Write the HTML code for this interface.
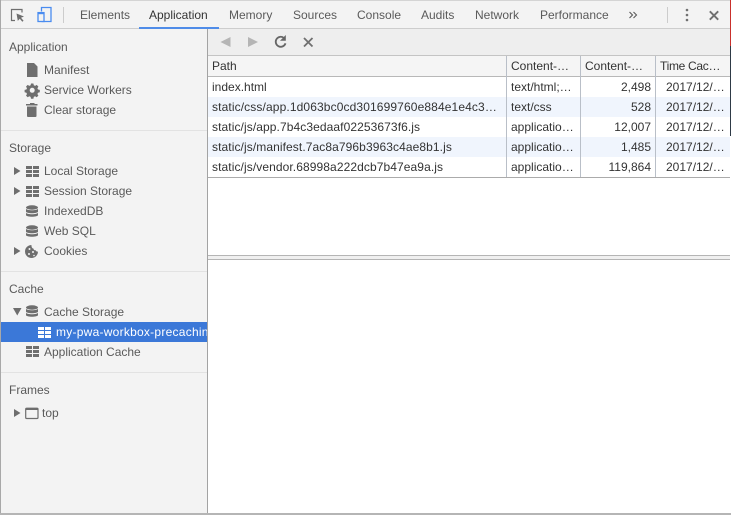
<!DOCTYPE html>
<html><head><meta charset="utf-8"><style>
html,body{margin:0;padding:0;width:731px;height:515px;overflow:hidden;background:#fff}
body{font-family:"Liberation Sans",sans-serif;font-size:12px;color:#303030;position:relative}
.a{position:absolute}
.t{position:absolute;white-space:nowrap;line-height:14px}
.g{color:#5a5a5a}
svg{position:absolute;overflow:visible}
.tab{position:absolute;top:8px;line-height:14px;color:#5a5a5a;white-space:nowrap}
.sec{color:#5a5a5a}
.c{position:absolute;white-space:nowrap;line-height:14px;color:#333}
.p{letter-spacing:.09px}
.r{text-align:right}
</style></head><body>
<!-- toolbar -->
<div class="a" style="left:0;top:0;width:730px;height:28px;background:#f3f3f3"></div>
<div class="a" style="left:0;top:0;width:730px;height:1px;background:#d4d4d4"></div>
<div class="a" style="left:0;top:28px;width:730px;height:1px;background:#cdcdcd"></div>
<svg style="left:0;top:0" width="60" height="28">
<path d="M15 20.500h-3.500v-11h10.500v3" fill="none" stroke="#6e6e6e" stroke-width="1.200"/>
<path d="M16.500 13.500l7.500 3-3 1.200 2.600 3-1.300 1-2.500-3-2 2.200z" fill="#6e6e6e"/>
<path d="M41.500 11.500v-4h9.500v14h-9.500" fill="none" stroke="#4a8cf0" stroke-width="1.300"/>
<rect x="38" y="12.600" width="6" height="8.900" fill="#f3f3f3" stroke="#4a8cf0" stroke-width="1.300"/>
<rect x="38" y="12" width="6" height="2.200" fill="#4a8cf0"/>
</svg>
<div class="a" style="left:63px;top:7px;width:1px;height:16px;background:#ccc"></div>
<div class="tab" style="left:80px">Elements</div>
<div class="tab" style="left:149px;color:#333">Application</div>
<div class="a" style="left:139px;top:27px;width:80px;height:2px;background:#4f8ce8"></div>
<div class="tab" style="left:229px">Memory</div>
<div class="tab" style="left:293px">Sources</div>
<div class="tab" style="left:357px">Console</div>
<div class="tab" style="left:421px">Audits</div>
<div class="tab" style="left:475px">Network</div>
<div class="tab" style="left:540px">Performance</div>
<svg style="left:628px;top:10px" width="12" height="10"><path d="M1.500 2l3 3-3 3M5.500 2l3 3-3 3" fill="none" stroke="#5a5a5a" stroke-width="1.100"/></svg>
<div class="a" style="left:667px;top:7px;width:1px;height:16px;background:#ccc"></div>
<svg style="left:680px;top:8px" width="14" height="16"><circle cx="7" cy="2" r="1.300" fill="#707070"/><circle cx="7" cy="7" r="1.300" fill="#707070"/><circle cx="7" cy="12" r="1.300" fill="#707070"/></svg>
<svg style="left:708px;top:9px" width="13" height="13"><path d="M1.800 2.300l8.400 8.400M10.200 2.300l-8.400 8.400" stroke="#707070" stroke-width="1.900"/></svg>
<!-- right-edge -->
<div class="a" style="left:730px;top:0;width:1px;height:46px;background:#c9302c"></div>
<div class="a" style="left:730px;top:46px;width:1px;height:90px;background:#2e3a46"></div>
<!-- sidebar -->
<div class="a" style="left:0;top:29px;width:207px;height:484px;background:#f3f3f3"></div>
<div class="a" style="left:0;top:0;width:1px;height:515px;background:#a8a8a8"></div>
<div class="a" style="left:207px;top:29px;width:1px;height:485px;background:#a3a3a3"></div>
<div class="a" style="left:0;top:513px;width:731px;height:2px;background:#b5b5b5"></div>
<div class="a" style="left:1px;top:130px;width:206px;height:1px;background:#e2e2e2"></div>
<div class="a" style="left:1px;top:271px;width:206px;height:1px;background:#e2e2e2"></div>
<div class="a" style="left:1px;top:372px;width:206px;height:1px;background:#e2e2e2"></div>

<div class="t sec" style="left:9px;top:40px">Application</div>
<div class="t g" style="left:44px;top:63px">Manifest</div>
<div class="t g" style="left:44px;top:83px">Service Workers</div>
<div class="t g" style="left:44px;top:103px">Clear storage</div>
<svg style="left:0;top:60px" width="44" height="62">
<path d="M27 3h7l3.500 3.500V17H27z" fill="#6e6e6e"/>
<g transform="translate(-1 0)"><path d="M32 23.500h2.400l.4 1.800 1.300.6 1.600-1 1.700 1.700-1 1.600.6 1.300 1.800.4v2.400l-1.800.4-.6 1.300 1 1.600-1.700 1.700-1.600-1-1.300.6-.4 1.800H32l-.4-1.800-1.300-.6-1.600 1-1.700-1.700 1-1.600-.6-1.300-1.800-.4v-2.400l1.800-.4.6-1.300-1-1.600 1.700-1.700 1.600 1 1.300-.6zM33.200 27.800a2.500 2.500 0 1 0 0 5 2.500 2.500 0 0 0 0-5z" fill="#6e6e6e" fill-rule="evenodd"/></g>
<path d="M30 43h4.500v1h3v1.500H26V44h4zM27 46.500h9.500V56a1 1 0 0 1-1 1H28a1 1 0 0 1-1-1z" fill="#6e6e6e"/>
</svg>

<div class="t sec" style="left:9px;top:141px">Storage</div>
<div class="t g" style="left:44px;top:164px">Local Storage</div>
<div class="t g" style="left:44px;top:184px">Session Storage</div>
<div class="t g" style="left:44px;top:204px">IndexedDB</div>
<div class="t g" style="left:44px;top:224px">Web SQL</div>
<div class="t g" style="left:44px;top:244px">Cookies</div>
<svg style="left:0;top:160px" width="44" height="100">
<g fill="#6e6e6e">
<path d="M14 7l6.500 4-6.500 4zM14 27l6.500 4-6.500 4zM14 87l6.500 4-6.500 4z"/>
<path d="M26 6h6v3h-6zM33 6h6v3h-6zM26 10h6v3h-6zM33 10h6v3h-6zM26 14h6v3h-6zM33 14h6v3h-6z"/>
<path d="M26 26h6v3h-6zM33 26h6v3h-6zM26 30h6v3h-6zM33 30h6v3h-6zM26 34h6v3h-6zM33 34h6v3h-6z"/>
<ellipse cx="32" cy="47.500" rx="6" ry="2.200"/><path d="M26 48.800c1 2 11 2 12 0v2.900c-1 2-11 2-12 0zM26 52.700c1 2 11 2 12 0v2.600c-1 2-11 2-12 0z"/>
</g>
</svg>
<svg style="left:0;top:220px" width="44" height="40">
<g fill="#6e6e6e">
<ellipse cx="32" cy="7.500" rx="6" ry="2.200"/><path d="M26 8.800c1 2 11 2 12 0v2.900c-1 2-11 2-12 0zM26 12.700c1 2 11 2 12 0v2.600c-1 2-11 2-12 0z"/>
<path d="M31.500 25a6.500 6.500 0 1 0 6.500 6.500c-1 .3-2-.2-2.200-1.200-1.200.2-2.300-.6-2.400-1.800-1.200 0-2-1.300-1.900-3.500z"/>
</g>
<g fill="#f3f3f3"><circle cx="29.500" cy="29" r="1"/><circle cx="33" cy="32" r="1"/><circle cx="29" cy="34" r="1"/><circle cx="34" cy="35.500" r=".8"/></g>
</svg>

<div class="t sec" style="left:9px;top:282px">Cache</div>
<div class="t g" style="left:44px;top:305px">Cache Storage</div>
<svg style="left:0;top:300px" width="44" height="60">
<g fill="#6e6e6e">
<path d="M13 8h8.500l-4.250 7.500z"/>
<ellipse cx="32" cy="7.500" rx="6" ry="2.200"/><path d="M26 8.800c1 2 11 2 12 0v2.900c-1 2-11 2-12 0zM26 12.700c1 2 11 2 12 0v2.600c-1 2-11 2-12 0z"/>
<path d="M26 46h6v3h-6zM33 46h6v3h-6zM26 50h6v3h-6zM33 50h6v3h-6zM26 54h6v3h-6zM33 54h6v3h-6z"/>
</g>
</svg>
<div class="a" style="left:1px;top:322px;width:206px;height:20px;background:#3b78d8;overflow:hidden">
<div class="t" style="left:55px;top:3px;color:#fff;letter-spacing:.25px">my-pwa-workbox-precaching</div>
<svg style="left:36px;top:4px" width="14" height="12"><path d="M1 1h6v3H1zM8 1h6v3H8zM1 5h6v3H1zM8 5h6v3H8zM1 9h6v3H1zM8 9h6v3H8z" fill="#fff"/></svg>
</div>
<div class="t g" style="left:44px;top:345px">Application Cache</div>

<div class="t sec" style="left:9px;top:383px">Frames</div>
<div class="t g" style="left:42px;top:406px">top</div>
<svg style="left:0;top:400px" width="44" height="24"><path d="M14 9l6.500 4-6.500 4z" fill="#6e6e6e"/><rect x="25.700" y="8.200" width="12.300" height="10.300" rx="1" fill="none" stroke="#6e6e6e" stroke-width="1.200"/><rect x="25.700" y="8" width="12.300" height="2" fill="#6e6e6e"/></svg>

<!-- main toolbar -->
<div class="a" style="left:208px;top:29px;width:522px;height:26px;background:#eeeeee"></div>
<div class="a" style="left:208px;top:55px;width:522px;height:1px;background:#c4c4c4"></div>
<svg style="left:208px;top:29px" width="120" height="26">
<path d="M12.500 13l10-5v10z" fill="#b5b5b5"/>
<path d="M40 8l10 5-10 5z" fill="#b5b5b5"/>
<path d="M76 9a5 5 0 1 0 1.500 5.300" fill="none" stroke="#666" stroke-width="1.800"/><path d="M77.800 6v5.800H72z" fill="#666"/>
<path d="M96 9l8.500 8.500M104.500 9L96 17.500" stroke="#707070" stroke-width="1.800"/>
</svg>
<!-- table -->
<div class="a" style="left:208px;top:56px;width:522px;height:20px;background:#f5f5f5"></div>
<div class="a" style="left:208px;top:76px;width:522px;height:1px;background:#b8b8b8"></div>
<div class="a" style="left:208px;top:97px;width:522px;height:20px;background:#f0f5fd"></div>
<div class="a" style="left:208px;top:137px;width:522px;height:20px;background:#f0f5fd"></div>
<div class="a" style="left:208px;top:177px;width:522px;height:1px;background:#ababab"></div>
<div class="a" style="left:506px;top:56px;width:1px;height:121px;background:#b9bfc8"></div>
<div class="a" style="left:580px;top:56px;width:1px;height:121px;background:#b9bfc8"></div>
<div class="a" style="left:655px;top:56px;width:1px;height:121px;background:#b9bfc8"></div>
<div class="a" style="left:208px;top:255px;width:522px;height:1px;background:#b5b5b5"></div>
<div class="a" style="left:208px;top:256px;width:522px;height:3px;background:#f0f0f0"></div>
<div class="a" style="left:208px;top:259px;width:522px;height:1px;background:#b5b5b5"></div>

<div class="c" style="left:212px;top:59px">Path</div>
<div class="c" style="left:511px;top:59px">Content-…</div>
<div class="c" style="left:585px;top:59px">Content-…</div>
<div class="c" style="left:660px;top:59px;letter-spacing:-.3px">Time Cac…</div>

<div class="c" style="left:212px;top:80px">index.html</div>
<div class="c" style="left:511px;top:80px">text/html;…</div>
<div class="c r" style="left:581px;width:70px;top:80px">2,498</div>
<div class="c" style="left:666px;top:80px">2017/12/…</div>

<div class="c p" style="left:212px;top:100px;letter-spacing:.12px">static/css/app.1d063bc0cd301699760e884e1e4c3…</div>
<div class="c" style="left:511px;top:100px">text/css</div>
<div class="c r" style="left:581px;width:70px;top:100px">528</div>
<div class="c" style="left:666px;top:100px">2017/12/…</div>

<div class="c p" style="left:212px;top:120px">static/js/app.7b4c3edaaf02253673f6.js</div>
<div class="c" style="left:511px;top:120px">applicatio…</div>
<div class="c r" style="left:581px;width:70px;top:120px">12,007</div>
<div class="c" style="left:666px;top:120px">2017/12/…</div>

<div class="c p" style="left:212px;top:140px">static/js/manifest.7ac8a796b3963c4ae8b1.js</div>
<div class="c" style="left:511px;top:140px">applicatio…</div>
<div class="c r" style="left:581px;width:70px;top:140px">1,485</div>
<div class="c" style="left:666px;top:140px">2017/12/…</div>

<div class="c p" style="left:212px;top:160px">static/js/vendor.68998a222dcb7b47ea9a.js</div>
<div class="c" style="left:511px;top:160px">applicatio…</div>
<div class="c r" style="left:581px;width:70px;top:160px">119,864</div>
<div class="c" style="left:666px;top:160px">2017/12/…</div>
</body></html>
